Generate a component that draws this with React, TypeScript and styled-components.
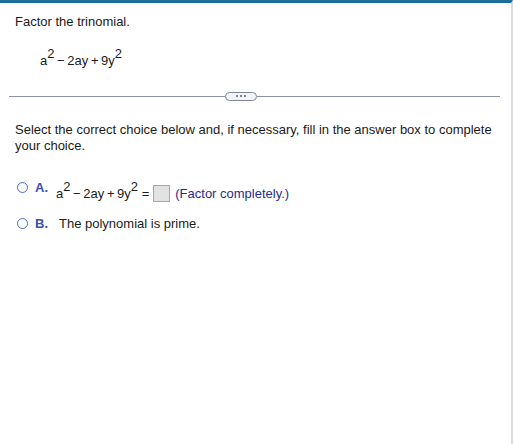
import React from "react"
import styled, { createGlobalStyle } from "styled-components"

const GlobalStyle = createGlobalStyle`
  html, body {
    margin: 0;
    padding: 0;
    background: #fff;
  }
  body {
    font-family: "Liberation Sans", Arial, sans-serif;
    font-size: 13px;
    color: #1a1a1a;
  }
`

const Page = styled.div`
  position: relative;
  width: 513px;
  height: 444px;
  box-sizing: border-box;
  border-top: 3px solid #1d6d98;
  border-right: 2px solid #dcdcdc;
  overflow: hidden;
`

const Question = styled.section`
  padding: 11px 0 0 15px;
`

const Prompt = styled.p`
  margin: 0;
  line-height: 15px;
`

const Expression = styled.div`
  margin: 24px 0 0 25px;
  line-height: 15px;
`

const Sup = styled.sup`
  font-size: 13px;
  vertical-align: 7px;
  line-height: 0;
`

const Op = styled.span`
  margin: 0 -1px;
`

const Divider = styled.div`
  display: flex;
  align-items: center;
  margin: 23px 11px 0 9px;
  height: 10px;
`

const Rule = styled.div<{ $width?: number }>`
  flex: ${p => (p.$width ? "none" : "1")};
  width: ${p => (p.$width ? `${p.$width}px` : "auto")};
  height: 1px;
  background: #8a93a3;
`

const Pill = styled.div`
  width: 30px;
  height: 7px;
  border: 1px solid #7d8696;
  border-radius: 5px;
  background: #f4f5f7;
  display: flex;
  align-items: center;
  justify-content: center;
  gap: 2px;
`

const Dot = styled.span`
  width: 2px;
  height: 2px;
  background: #555c68;
  border-radius: 1px;
`

const Instructions = styled.p`
  margin: 21px 10px 0 15px;
  line-height: 16px;
`

const Choices = styled.div`
  display: flex;
  flex-direction: column;
  gap: 21px;
  margin: 26px 0 0 17px;
`

const Choice = styled.div`
  display: flex;
  align-items: center;
  height: 15px;
`

const Radio = styled.span`
  width: 9px;
  height: 9px;
  border: 1.5px solid #4c70c6;
  border-radius: 50%;
  flex: none;
`

const Letter = styled.span`
  color: #3651b0;
  font-weight: bold;
  width: 24px;
  margin-left: 7px;
  flex: none;
`

const Body = styled.span<{ $top?: number; $shift?: number }>`
  display: flex;
  align-items: center;
  white-space: nowrap;
  position: relative;
  top: ${p => p.$top ?? 0}px;
  margin-left: ${p => p.$shift ?? 0}px;
`

const AnswerBox = styled.span`
  display: inline-block;
  width: 15px;
  height: 15px;
  border: 1px solid #9aa7c4;
  background: #e2e2e2;
  margin: 0 5px 0 4px;
`

const Hint = styled.span`
  color: #1f2d8a;
`

const Dots = () => (
  <Pill>
    <Dot />
    <Dot />
    <Dot />
  </Pill>
)

const Trinomial = () => (
  <>
    a<Sup>2</Sup> <Op>−</Op> 2ay <Op>+</Op> 9y<Sup>2</Sup>
  </>
)

export default function App() {
  return (
    <Page>
      <GlobalStyle />
      <Question>
        <Prompt>Factor the trinomial.</Prompt>
        <Expression>
          <Trinomial />
        </Expression>
      </Question>
      <Divider>
        <Rule $width={216} />
        <Dots />
        <Rule />
      </Divider>
      <Instructions>
        Select the correct choice below and, if necessary, fill in the answer box to complete your choice.
      </Instructions>
      <Choices>
        <Choice>
          <Radio />
          <Letter>A.</Letter>
          <Body $top={6} $shift={-3}>
            <span>
              <Trinomial /> =
            </span>
            <AnswerBox />
            <Hint>(Factor completely.)</Hint>
          </Body>
        </Choice>
        <Choice>
          <Radio />
          <Letter>B.</Letter>
          <Body>The polynomial is prime.</Body>
        </Choice>
      </Choices>
    </Page>
  )
}
